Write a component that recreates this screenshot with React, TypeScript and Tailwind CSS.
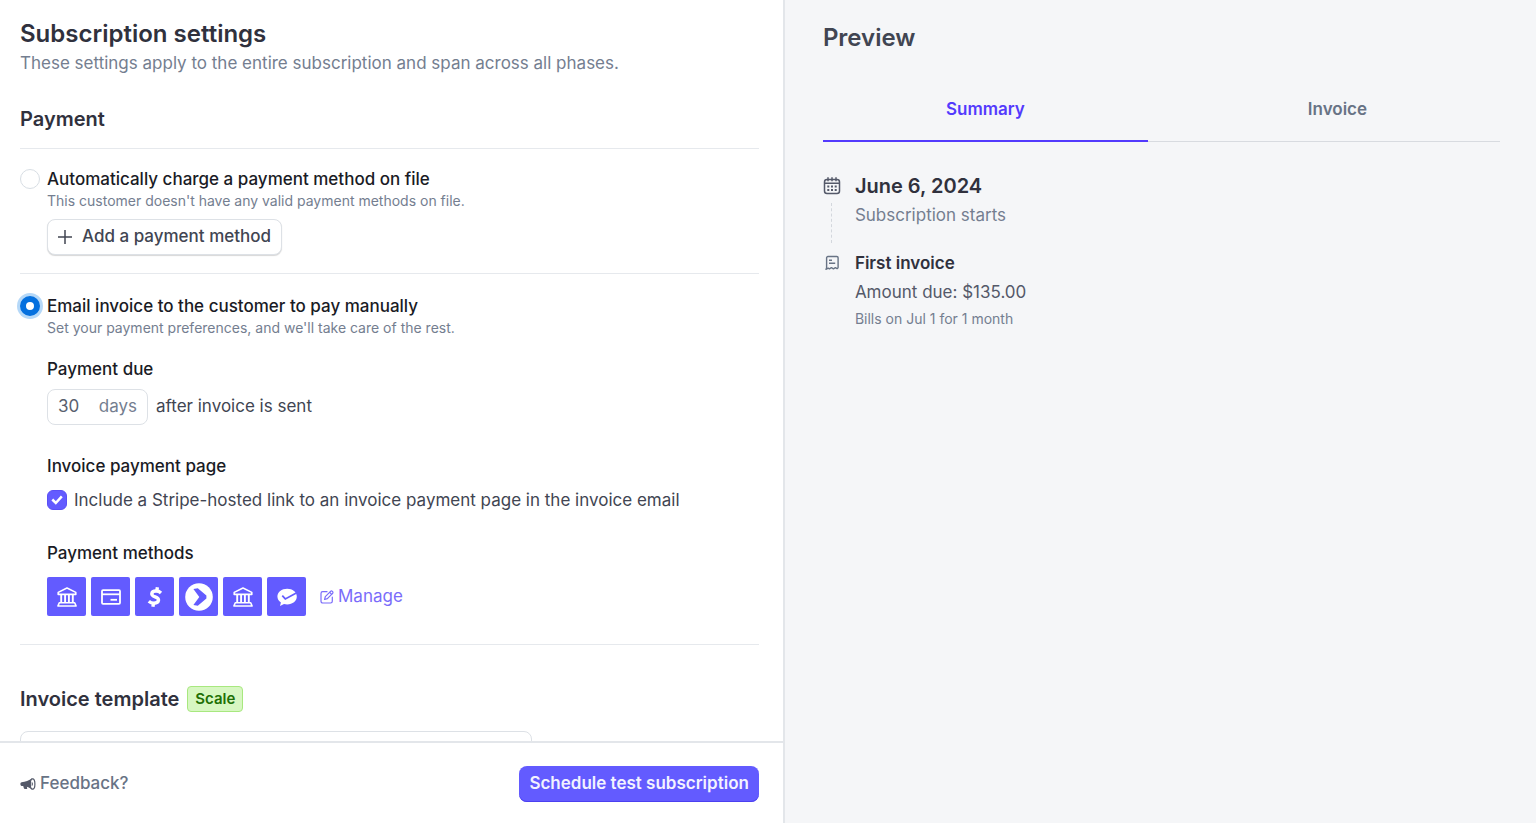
import { useState } from "react";
import type { ReactNode } from "react";

type Collection = "charge" | "email";
type Tab = "summary" | "invoice";

function BankIcon() {
  return (
    <svg viewBox="0 0 20 20" className="h-5 w-5" fill="none" stroke="currentColor" strokeWidth="1.6" strokeLinejoin="round" aria-hidden="true">
      <path d="M1.2 5.4 10 1l8.800 4.400v2H1.200z" />
      <path d="M4.200 7.500v8M8.100 8v8M11.900 8v8M15.800 7.500v8" strokeWidth="1.900" />
      <path d="M2.300 15.800h15.400l1.400 3.200H.9z" />
    </svg>
  );
}

function CardIcon() {
  return (
    <svg viewBox="0 0 20 20" className="h-5 w-5" fill="none" stroke="currentColor" aria-hidden="true">
      <rect x="1" y="3.2" width="18" height="13.6" rx="1" strokeWidth="1.8" />
      <path d="M1 7.3h18" strokeWidth="1.8" />
      <path d="M9.5 12.8H16" strokeWidth="1.8" />
    </svg>
  );
}

function DollarIcon() {
  return (
    <svg viewBox="0 0 20 20" className="h-5 w-5" fill="none" stroke="currentColor" strokeWidth="3.400" aria-hidden="true">
      <path d="M16 5.900C14.600 4.600 12.900 4 11 4 8.700 4 7 5 6.800 6.700c-.4 3.800 7.300 2.700 6.700 6.600-.3 1.900-2.200 2.900-4.500 2.900-2 0-3.800-.7-5.200-2" />
      <path d="M11.700 4.200 12.400.3M7.900 19.700l.7-3.700" />
    </svg>
  );
}

function ArrowCircleIcon() {
  return (
    <svg viewBox="0 0 28 28" className="h-7 w-7" aria-hidden="true">
      <circle cx="14" cy="14" r="13.800" fill="#fff" />
      <path d="M8.400 5.900 12.800 5.300 21.400 12.600v2.800L12.800 22.700 8.400 22.100 14.300 14z" fill="#635bff" />
    </svg>
  );
}

function ChatCheckIcon() {
  return (
    <svg viewBox="0 0 20 20" className="h-5 w-5" aria-hidden="true">
      <path d="M10.200 1.800c5.400 0 9.600 3.300 9.600 7.800s-4.200 7.900-9.600 7.900c-1.100 0-2.200-.2-3.200-.5L3 19l.9-3.400C1.800 14.200.4 12 .4 9.600c0-4.500 4.300-7.800 9.800-7.800z" fill="#fff" />
      <path d="M5.300 8.600 8.300 11.900 19.300 6.100" fill="none" stroke="#635bff" strokeWidth="1.700" />
    </svg>
  );
}

function EditIcon() {
  return (
    <svg viewBox="0 0 14 14" className="h-3.5 w-3.5" fill="none" stroke="currentColor" strokeWidth="1.200" strokeLinecap="round" strokeLinejoin="round" aria-hidden="true">
      <path d="M7 1.700H2.700A1.700 1.700 0 0 0 1 3.400v7.900A1.700 1.700 0 0 0 2.700 13h7.900a1.700 1.700 0 0 0 1.700-1.700V7.200" />
      <path d="M4.600 9.500l.7-2.900 5.300-5.300a1.200 1.200 0 0 1 1.700 0l.3.300a1.200 1.200 0 0 1 0 1.700L7.400 8.700z" />
      <path d="M9.700 2.300l2 2" />
    </svg>
  );
}

function MegaphoneIcon() {
  return (
    <svg viewBox="0 0 16 14" className="h-3.5 w-4 text-[#545969]" aria-hidden="true">
      <path d="M12.300 1.300C8.900 3.700 5.400 4.700 1.600 5.200.8 5.300.4 6 .4 7s.4 1.700 1.200 1.900l1.600.2.700 2.200c.1.500.5.800 1 .8h1.500c.6 0 1-.6.800-1.200l-.4-1.200c2 .6 3.800 1.500 5.500 3z" fill="currentColor" />
      <ellipse cx="12.600" cy="7" rx="2.300" ry="5.200" fill="#fff" stroke="currentColor" strokeWidth="1.200" />
      <path d="M11.700 5v4c.8-.2 1.200-1 1.200-2s-.4-1.800-1.200-2z" fill="currentColor" />
    </svg>
  );
}

function CalendarIcon() {
  return (
    <svg viewBox="0 0 18 18" className="h-[18px] w-[18px]" fill="none" stroke="currentColor" strokeWidth="1.500" aria-hidden="true">
      <rect x="1.500" y="2.500" width="15" height="14" rx="2.500" />
      <path d="M1.500 6.300h15M5 .3v4M9 .3v4M13 .3v4" />
      <path d="M4.300 9.500h2M8 9.500h2M11.700 9.500h2M4.300 13h2M8 13h2M11.700 13h2" strokeWidth="2" />
    </svg>
  );
}

function ReceiptIcon() {
  return (
    <svg viewBox="0 0 16 16" className="h-4 w-4" fill="none" stroke="currentColor" strokeWidth="1.400" strokeLinejoin="round" aria-hidden="true">
      <path d="M1.900 14.300c.5-.5.700-1 .7-1.800V2.800A1.300 1.300 0 0 1 3.900 1.500h8.900a1.300 1.300 0 0 1 1.300 1.300v9.700a1 1 0 0 1-1.500.8l-1.200-.7-2 1.200-2-1.200-2 1.200-1.200-.7z" />
      <path d="M5 5.200h3M5 8.300h6.200" />
    </svg>
  );
}

const PAYMENT_METHODS: { name: string; icon: ReactNode }[] = [
  { name: "ACH Direct Debit", icon: <BankIcon /> },
  { name: "Card", icon: <CardIcon /> },
  { name: "Cash App", icon: <DollarIcon /> },
  { name: "Link", icon: <ArrowCircleIcon /> },
  { name: "Bank transfer", icon: <BankIcon /> },
  { name: "WeChat Pay", icon: <ChatCheckIcon /> },
];

const RADIO_CLASS =
  "h-5 w-5 shrink-0 appearance-none rounded-full border border-[#d8dee4] bg-white checked:border-[6px] checked:border-[#0570de] checked:ring-3 checked:ring-[#b5d8f8]";

export default function App() {
  const [collection, setCollection] = useState<Collection>("email");
  const [includeLink, setIncludeLink] = useState(true);
  const [days, setDays] = useState("30");
  const [tab, setTab] = useState<Tab>("summary");

  return (
    <div className="flex h-screen bg-white font-['Inter',sans-serif] text-base text-[#414552]">
      {/* Settings column */}
      <main className="flex w-[51.1%] flex-col border-r-2 border-[#e3e6ea]">
        <div className="min-h-0 flex-1 overflow-y-auto pt-5 pr-6 pl-5 [scrollbar-width:none]">
          <h1 className="text-2xl leading-7 font-semibold text-[#30313d]">Subscription settings</h1>
          <p className="mt-[3px] text-[17px] leading-6 text-[#747e90]">
            These settings apply to the entire subscription and span across all phases.
          </p>

          <h2 className="mt-[30px] text-xl leading-7 font-semibold text-[#30313d]">Payment</h2>

          <section className="mt-[15px] border-t border-[#e6e9ed] pt-[18px] pb-[18px]">
            <div className="flex items-center gap-[7px]">
              <input
                id="charge"
                type="radio"
                name="collection"
                checked={collection === "charge"}
                onChange={() => setCollection("charge")}
                className={RADIO_CLASS}
              />
              <label htmlFor="charge" className="text-[17px] leading-6 font-medium text-[#1a1b25]">
                Automatically charge a payment method on file
              </label>
            </div>
            <div className="pl-[27px]">
              <p className="text-sm leading-5 text-[#747e90]">
                This customer doesn't have any valid payment methods on file.
              </p>
              <button
                type="button"
                className="mt-2 flex h-9 items-center gap-2.5 rounded-lg border border-[#dde1e6] bg-white px-2.5 text-[17px] font-medium shadow-[0_1px_1px_rgba(0,0,0,0.16)]"
              >
                <svg viewBox="0 0 14 14" className="h-3.5 w-3.5" stroke="currentColor" strokeWidth="1.500" aria-hidden="true">
                  <path d="M7 0v14M0 7h14" />
                </svg>
                Add a payment method
              </button>
            </div>
          </section>

          <section className="border-t border-[#e6e9ed] pt-5 pb-7">
            <div className="flex items-center gap-[7px]">
              <input
                id="email"
                type="radio"
                name="collection"
                checked={collection === "email"}
                onChange={() => setCollection("email")}
                className={RADIO_CLASS}
              />
              <label htmlFor="email" className="text-[17px] leading-6 font-medium text-[#1a1b25]">
                Email invoice to the customer to pay manually
              </label>
            </div>
            <div className="pl-[27px]">
              <p className="text-sm leading-5 text-[#747e90]">
                Set your payment preferences, and we'll take care of the rest.
              </p>

              <label htmlFor="days" className="mt-[19px] block text-[17px] leading-6 font-medium text-[#1a1b25]">
                Payment due
              </label>
              <div className="mt-2 flex items-center gap-2 text-[17px]">
                <div className="flex h-9 w-[101px] items-center justify-between rounded-lg border border-[#dde1e6] px-2.5">
                  <input
                    id="days"
                    type="text"
                    value={days}
                    onChange={(e) => setDays(e.target.value)}
                    className="w-8 bg-transparent text-[#595f6e] outline-none"
                  />
                  <span className="text-[#747e90]">days</span>
                </div>
                <span>after invoice is sent</span>
              </div>

              <h3 className="mt-[29px] text-[17px] leading-6 font-medium text-[#1a1b25]">Invoice payment page</h3>
              <div className="mt-2.5 flex items-center gap-[7px]">
                <div className="relative h-5 w-5 shrink-0">
                  <input
                    id="hosted"
                    type="checkbox"
                    checked={includeLink}
                    onChange={(e) => setIncludeLink(e.target.checked)}
                    className="block h-5 w-5 appearance-none rounded-md border border-[#d8dee4] checked:border-[#5a4ff5] checked:bg-[#635bff]"
                  />
                  {includeLink && (
                    <svg viewBox="0 0 20 20" className="pointer-events-none absolute inset-0 h-5 w-5" fill="none" stroke="#fff" strokeWidth="2.500" aria-hidden="true">
                      <path d="M5.300 9.500l3.500 3.500 6-6.700" />
                    </svg>
                  )}
                </div>
                <label htmlFor="hosted" className="text-[17px] leading-6">
                  Include a Stripe-hosted link to an invoice payment page in the invoice email
                </label>
              </div>

              <h3 className="mt-[29px] text-[17px] leading-6 font-medium text-[#1a1b25]">Payment methods</h3>
              <div className="mt-3 flex items-center">
                <ul className="flex gap-[5px]">
                  {PAYMENT_METHODS.map((method) => (
                    <li
                      key={method.name}
                      title={method.name}
                      className="flex h-[39px] w-[39px] items-center justify-center rounded-xs bg-[#635bff] text-white"
                    >
                      {method.icon}
                    </li>
                  ))}
                </ul>
                <a href="#manage" className="ml-3.5 flex items-center gap-1 text-[17px] text-[#7a6cfa]">
                  <EditIcon />
                  Manage
                </a>
              </div>
            </div>
          </section>

          <section className="border-t border-[#e6e9ed] pt-10">
            <div className="flex items-center gap-2">
              <h2 className="text-xl leading-7 font-semibold text-[#30313d]">Invoice template</h2>
              <span className="rounded-sm border border-[#a8e87f] bg-[#d7f7c2] px-[7px] text-[15px] leading-6 font-semibold text-[#217005]">
                Scale
              </span>
            </div>
            <select
              aria-label="Invoice template"
              className="mt-[18px] h-10 w-[512px] max-w-full appearance-none rounded-lg border border-[#dde1e6] bg-white px-3"
            />
          </section>
        </div>

        <footer className="flex items-center justify-between border-t-2 border-[#e3e6ea] pt-[23px] pr-6 pb-[21px] pl-5">
          <a href="#feedback" className="flex items-center gap-1 text-[17px] font-medium text-[#687385]">
            <MegaphoneIcon />
            Feedback?
          </a>
          <button
            type="button"
            className="h-9 rounded-lg bg-[#635bff] px-2.5 text-[17px] font-semibold text-[#f2f2ff] shadow-[inset_0_-1px_0_#4b3ff0]"
          >
            Schedule test subscription
          </button>
        </footer>
      </main>

      {/* Preview column */}
      <aside className="flex-1 bg-[#f5f6f8] pt-6 pr-9 pl-[38px]">
        <h2 className="text-2xl leading-7 font-semibold text-[#414552]">Preview</h2>

        <div role="tablist" className="mt-[27px] flex border-b border-[#d8dbe0] text-[17px] leading-6 font-semibold">
          <button
            type="button"
            role="tab"
            aria-selected={tab === "summary"}
            onClick={() => setTab("summary")}
            className={`-mb-px w-[48%] border-b-2 pt-[18px] pb-[19px] ${
              tab === "summary" ? "border-[#533afd] text-[#533afd]" : "border-transparent text-[#687385]"
            }`}
          >
            Summary
          </button>
          <button
            type="button"
            role="tab"
            aria-selected={tab === "invoice"}
            onClick={() => setTab("invoice")}
            className={`-mb-px ml-[27px] flex-1 border-b-2 pt-[18px] pb-[19px] ${
              tab === "invoice" ? "border-[#533afd] text-[#533afd]" : "border-transparent text-[#687385]"
            }`}
          >
            Invoice
          </button>
        </div>

        <ol className="mt-[30px]">
          <li className="flex gap-3.5">
            <div className="flex w-[18px] flex-col items-center pt-[5px] text-[#545969]">
              <CalendarIcon />
              <div className="mt-2 h-10 border-l border-dashed border-[#d3d7dd]" />
            </div>
            <div>
              <h3 className="text-xl leading-7 font-semibold text-[#30313d]">June 6, 2024</h3>
              <p className="mt-[3px] text-[17px] leading-6 text-[#747e90]">Subscription starts</p>
            </div>
          </li>
          <li className="mt-2 flex gap-3.5">
            <div className="flex w-[18px] justify-center pt-1 text-[#687385]">
              <ReceiptIcon />
            </div>
            <div>
              <h3 className="text-[17px] leading-6 font-semibold text-[#30313d]">First invoice</h3>
              <p className="mt-[5px] text-[17px] leading-6 text-[#545969]">Amount due: $135.00</p>
              <p className="mt-[5px] text-sm leading-5 text-[#747e90]">Bills on Jul 1 for 1 month</p>
            </div>
          </li>
        </ol>
      </aside>
    </div>
  );
}
